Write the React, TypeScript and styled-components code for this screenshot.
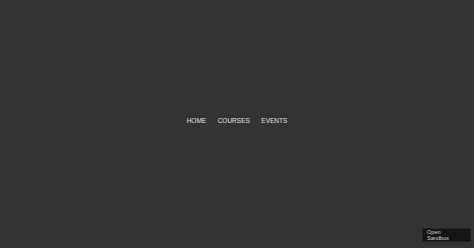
import React from "react";
import styled, { createGlobalStyle } from "styled-components";

const GlobalStyle = createGlobalStyle`
  html, body {
    margin: 0;
    padding: 0;
    height: 100%;
    background: #333333;
  }
  #root {
    height: 100%;
  }
`;

const Page = styled.div`
  height: 100%;
  display: flex;
  align-items: center;
  justify-content: center;
  padding-bottom: 5px;
  box-sizing: border-box;
  font-family: "Liberation Sans", Arial, sans-serif;
`;

const Nav = styled.nav`
  display: flex;
  gap: 11.5px;
`;

const NavLink = styled.a`
  color: #e0e0e0;
  font-size: 6.5px;
  text-decoration: none;
  line-height: 1;
`;

const SandboxButton = styled.button`
  position: fixed;
  right: 3px;
  bottom: 6px;
  width: 49px;
  height: 14px;
  padding: 0 4px;
  background: #151515;
  border: 1px solid #222;
  border-radius: 1px;
  color: #d0d0d0;
  font-family: "Liberation Sans", Arial, sans-serif;
  font-size: 5.6px;
  line-height: 6px;
  text-align: left;
  box-sizing: border-box;
`;

export default function App() {
  return (
    <>
      <GlobalStyle />
      <Page>
        <Nav>
          <NavLink href="#">HOME</NavLink>
          <NavLink href="#">COURSES</NavLink>
          <NavLink href="#">EVENTS</NavLink>
        </Nav>
      </Page>
      <SandboxButton>
        Open
        <br />
        Sandbox
      </SandboxButton>
    </>
  );
}
